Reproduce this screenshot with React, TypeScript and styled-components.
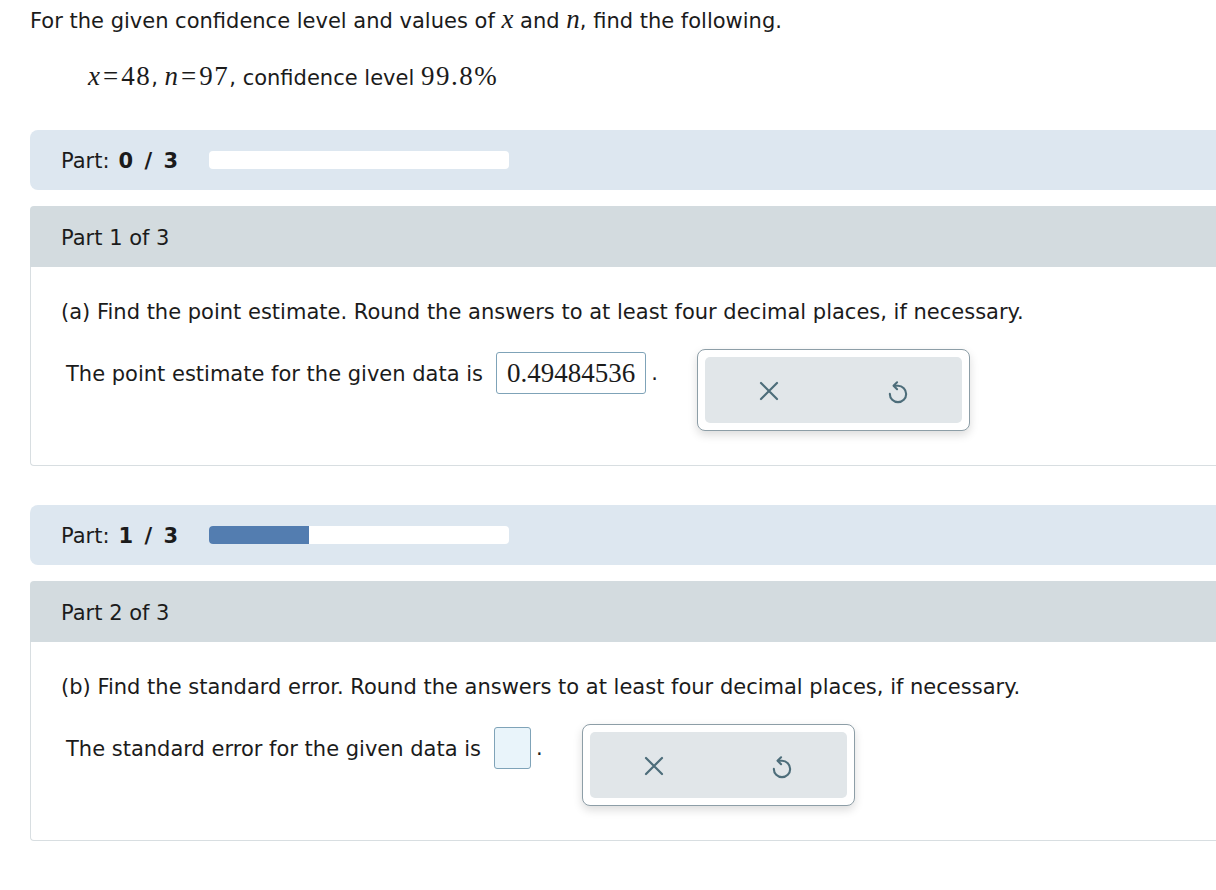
import styled, { createGlobalStyle } from "styled-components";

const GlobalStyle = createGlobalStyle`
  html, body {
    margin: 0;
    padding: 0;
    background: #ffffff;
    overflow-x: hidden;
  }
  body {
    font-family: "DejaVu Sans", Verdana, sans-serif;
    font-size: 21px;
    color: #1b1b1b;
  }
`;

const Page = styled.div`
  width: 1216px;
  padding: 6px 0 0 30px;
  box-sizing: border-box;
`;

const Title = styled.p`
  margin: 0;
  line-height: 26px;
`;

const MathLine = styled.p`
  margin: 25px 0 0 58px;
  line-height: 34px;
`;

const M = styled.span<{ $italic?: boolean }>`
  font-family: "Liberation Serif", "Times New Roman", serif;
  font-size: 27px;
  font-style: ${(p) => (p.$italic ? "italic" : "normal")};
  letter-spacing: ${(p) => (p.$italic ? "0" : "1.5px")};
`;

const Eq = styled.span`
  font-family: "Liberation Serif", serif;
  font-size: 27px;
  margin: 0 3px;
`;

const Panels = styled.div`
  margin-top: 35px;
  margin-right: -40px;
  display: flex;
  flex-direction: column;
`;

const ProgressBar = styled.div`
  height: 60px;
  background: #dde7f0;
  border-radius: 8px 0 0 8px;
  display: flex;
  align-items: center;
  padding-left: 31px;
`;

const PartLabel = styled.span`
  padding-top: 2px;
`;

const Strong = styled.b`
  margin-left: 9px;
  font-weight: bold;
  word-spacing: 4px;
`;

const Track = styled.div`
  width: 300px;
  height: 18px;
  margin-left: 31px;
  background: #ffffff;
  border-radius: 4px;
  overflow: hidden;
  display: flex;
`;

const Fill = styled.div`
  height: 100%;
  background: #537db0;
`;

const Card = styled.div`
  margin-top: 16px;
  margin-bottom: 39px;
  display: flex;
  flex-direction: column;
`;

const CardHeader = styled.div`
  height: 61px;
  box-sizing: border-box;
  background: #d3dbdf;
  border-radius: 4px 0 0 0;
  display: flex;
  align-items: center;
  padding: 3px 0 0 31px;
`;

const CardBody = styled.div`
  border-left: 1px solid #d8dee1;
  border-bottom: 1px solid #d8dee1;
  border-radius: 0 0 0 4px;
  padding: 32px 0 34px 30px;
`;

const Question = styled.p`
  margin: 0;
  line-height: 26px;
`;

const AnswerRow = styled.div`
  margin-top: 24px;
  display: flex;
  align-items: flex-start;
`;

const AnswerGroup = styled.div`
  margin-top: 3px;
  display: flex;
  align-items: center;
  padding-left: 5px;
`;

const Label = styled.span`
  padding-top: 2px;
`;

const Input = styled.div<{ $empty?: boolean }>`
  margin-left: 13px;
  height: 42px;
  min-width: 37px;
  box-sizing: border-box;
  border: 1.5px solid #7fa3b8;
  border-radius: 3px;
  background: ${(p) => (p.$empty ? "#e9f4fa" : "#ffffff")};
  padding: ${(p) => (p.$empty ? "0" : "0 10px")};
  display: flex;
  align-items: center;
  font-family: "Liberation Serif", "Times New Roman", serif;
  font-size: 27px;
`;

const Period = styled.span`
  margin-left: 5px;
`;

const ActionBox = styled.div`
  margin-left: 39px;
  width: 273px;
  height: 82px;
  box-sizing: border-box;
  border: 1px solid #8d9ea7;
  border-radius: 8px;
  background: #ffffff;
  padding: 7px;
  box-shadow: 0 4px 10px rgba(0, 0, 0, 0.14);
`;

const ActionInner = styled.div`
  height: 100%;
  background: #e1e6e9;
  border-radius: 5px;
  display: flex;
`;

const IconButton = styled.button`
  flex: 1;
  border: none;
  background: none;
  display: flex;
  align-items: center;
  justify-content: center;
  padding: 0;
  padding-top: 2px;
  color: #4d6d7a;
`;

const ClearIcon = () => (
  <svg width="24" height="24" viewBox="0 0 24 24" fill="none" stroke="currentColor" strokeWidth="2.2" strokeLinecap="round">
    <path d="M4 4 L20 20 M20 4 L4 20" />
  </svg>
);

const UndoIcon = () => (
  <svg width="28" height="28" viewBox="0 0 24 24" fill="none" stroke="currentColor" strokeWidth="1.8" strokeLinecap="round" strokeLinejoin="round">
    <path d="M8.5 7.5 H12 A7 7 0 1 1 5 14.5" />
    <path d="M11.2 4.5 L8.2 7.5 L11.2 10.5" />
  </svg>
);

type PartProps = {
  done: number;
  index: number;
  question: string;
  label: string;
  value?: string;
};

const Part = ({ done, index, question, label, value }: PartProps) => (
  <>
    <ProgressBar>
      <PartLabel>
        Part:<Strong>{done} / 3</Strong>
      </PartLabel>
      <Track>
        <Fill style={{ width: `${(done / 3) * 100}%` }} />
      </Track>
    </ProgressBar>
    <Card>
      <CardHeader>Part {index} of 3</CardHeader>
      <CardBody>
        <Question>{question}</Question>
        <AnswerRow>
          <AnswerGroup>
            <Label>{label}</Label>
            <Input $empty={!value}>{value}</Input>
            <Period>.</Period>
          </AnswerGroup>
          <ActionBox>
            <ActionInner>
              <IconButton aria-label="clear">
                <ClearIcon />
              </IconButton>
              <IconButton aria-label="undo">
                <UndoIcon />
              </IconButton>
            </ActionInner>
          </ActionBox>
        </AnswerRow>
      </CardBody>
    </Card>
  </>
);

export default function App() {
  return (
    <Page>
      <GlobalStyle />
      <Title>
        For the given confidence level and values of <M $italic>x</M> and <M $italic>n</M>, find the following.
      </Title>
      <MathLine>
        <M $italic>x</M>
        <Eq>=</Eq>
        <M>48</M>, <M $italic>n</M>
        <Eq>=</Eq>
        <M>97</M>, confidence level <M>99.8%</M>
      </MathLine>
      <Panels>
        <Part
          done={0}
          index={1}
          question="(a) Find the point estimate. Round the answers to at least four decimal places, if necessary."
          label="The point estimate for the given data is"
          value="0.49484536"
        />
        <Part
          done={1}
          index={2}
          question="(b) Find the standard error. Round the answers to at least four decimal places, if necessary."
          label="The standard error for the given data is"
        />
      </Panels>
    </Page>
  );
}
